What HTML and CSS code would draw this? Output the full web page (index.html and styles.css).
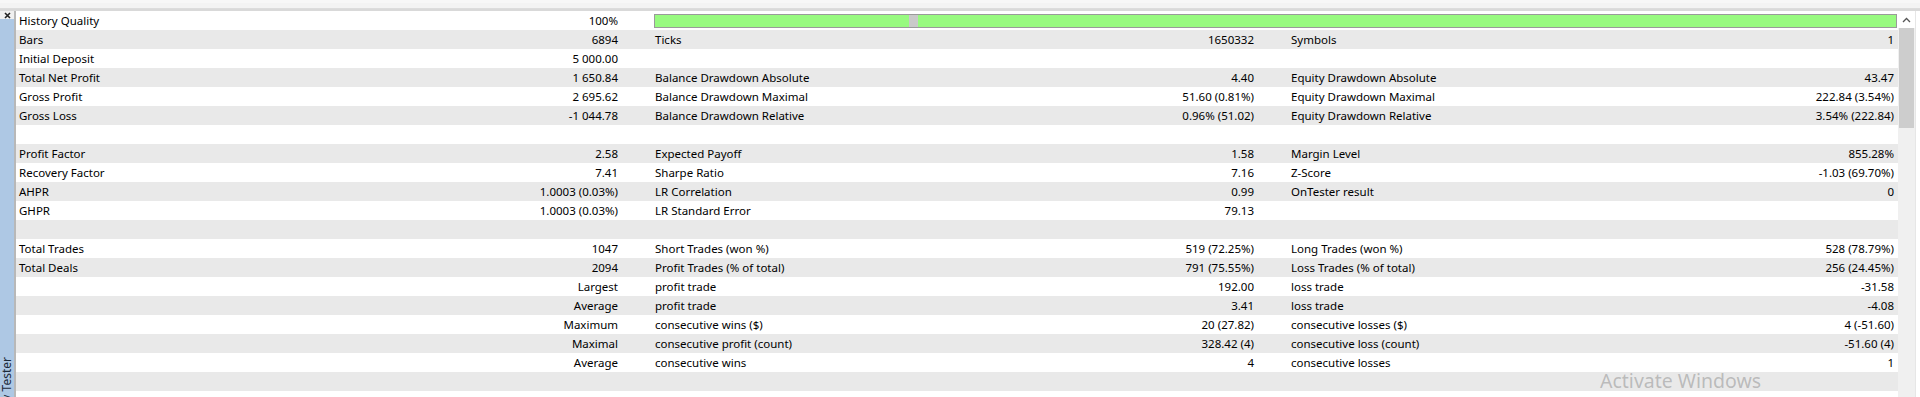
FILE: index.html
```html
<!DOCTYPE html>
<html>
<head>
<meta charset="utf-8">
<link rel="stylesheet" href="styles.css">
</head>
<body>
<div class="window">
  <div class="topstrip"></div>
  <div class="main">
    <div class="sidebar">
      <div class="close"><svg width="7" height="7" viewBox="0 0 7 7"><path d="M1 1L6 6M6 1L1 6" stroke="#222" stroke-width="1.6"/></svg></div>
      <div class="tab"><span class="tab-label">Strategy Tester</span></div>
    </div>
    <div class="table">
      <div class="row">
        <div class="pair"><span>History Quality</span><span>100%</span></div>
        <div class="quality"><div class="bar"><div class="mark"></div></div></div>
      </div>
      <div class="row">
        <div class="pair"><span>Bars</span><span>6894</span></div>
        <div class="pair"><span>Ticks</span><span>1650332</span></div>
        <div class="pair"><span>Symbols</span><span>1</span></div>
      </div>
      <div class="row">
        <div class="pair"><span>Initial Deposit</span><span>5 000.00</span></div>
      </div>
      <div class="row">
        <div class="pair"><span>Total Net Profit</span><span>1 650.84</span></div>
        <div class="pair"><span>Balance Drawdown Absolute</span><span>4.40</span></div>
        <div class="pair"><span>Equity Drawdown Absolute</span><span>43.47</span></div>
      </div>
      <div class="row">
        <div class="pair"><span>Gross Profit</span><span>2 695.62</span></div>
        <div class="pair"><span>Balance Drawdown Maximal</span><span>51.60 (0.81%)</span></div>
        <div class="pair"><span>Equity Drawdown Maximal</span><span>222.84 (3.54%)</span></div>
      </div>
      <div class="row">
        <div class="pair"><span>Gross Loss</span><span>-1 044.78</span></div>
        <div class="pair"><span>Balance Drawdown Relative</span><span>0.96% (51.02)</span></div>
        <div class="pair"><span>Equity Drawdown Relative</span><span>3.54% (222.84)</span></div>
      </div>
      <div class="row"></div>
      <div class="row">
        <div class="pair"><span>Profit Factor</span><span>2.58</span></div>
        <div class="pair"><span>Expected Payoff</span><span>1.58</span></div>
        <div class="pair"><span>Margin Level</span><span>855.28%</span></div>
      </div>
      <div class="row">
        <div class="pair"><span>Recovery Factor</span><span>7.41</span></div>
        <div class="pair"><span>Sharpe Ratio</span><span>7.16</span></div>
        <div class="pair"><span>Z-Score</span><span>-1.03 (69.70%)</span></div>
      </div>
      <div class="row">
        <div class="pair"><span>AHPR</span><span>1.0003 (0.03%)</span></div>
        <div class="pair"><span>LR Correlation</span><span>0.99</span></div>
        <div class="pair"><span>OnTester result</span><span>0</span></div>
      </div>
      <div class="row">
        <div class="pair"><span>GHPR</span><span>1.0003 (0.03%)</span></div>
        <div class="pair"><span>LR Standard Error</span><span>79.13</span></div>
      </div>
      <div class="row"></div>
      <div class="row">
        <div class="pair"><span>Total Trades</span><span>1047</span></div>
        <div class="pair"><span>Short Trades (won %)</span><span>519 (72.25%)</span></div>
        <div class="pair"><span>Long Trades (won %)</span><span>528 (78.79%)</span></div>
      </div>
      <div class="row">
        <div class="pair"><span>Total Deals</span><span>2094</span></div>
        <div class="pair"><span>Profit Trades (% of total)</span><span>791 (75.55%)</span></div>
        <div class="pair"><span>Loss Trades (% of total)</span><span>256 (24.45%)</span></div>
      </div>
      <div class="row">
        <div class="pair"><span></span><span>Largest</span></div>
        <div class="pair"><span>profit trade</span><span>192.00</span></div>
        <div class="pair"><span>loss trade</span><span>-31.58</span></div>
      </div>
      <div class="row">
        <div class="pair"><span></span><span>Average</span></div>
        <div class="pair"><span>profit trade</span><span>3.41</span></div>
        <div class="pair"><span>loss trade</span><span>-4.08</span></div>
      </div>
      <div class="row">
        <div class="pair"><span></span><span>Maximum</span></div>
        <div class="pair"><span>consecutive wins ($)</span><span>20 (27.82)</span></div>
        <div class="pair"><span>consecutive losses ($)</span><span>4 (-51.60)</span></div>
      </div>
      <div class="row">
        <div class="pair"><span></span><span>Maximal</span></div>
        <div class="pair"><span>consecutive profit (count)</span><span>328.42 (4)</span></div>
        <div class="pair"><span>consecutive loss (count)</span><span>-51.60 (4)</span></div>
      </div>
      <div class="row">
        <div class="pair"><span></span><span>Average</span></div>
        <div class="pair"><span>consecutive wins</span><span>4</span></div>
        <div class="pair"><span>consecutive losses</span><span>1</span></div>
      </div>
      <div class="row"></div>
      <div class="row"></div>
    </div>
    <div class="scrollbar">
      <div class="arrow"><svg width="9" height="6" viewBox="0 0 9 6"><path d="M1 5L4.5 1.5L8 5" fill="none" stroke="#555" stroke-width="1.3"/></svg></div>
      <div class="thumb"></div>
    </div>
    <div class="rightedge"></div>
  </div>
  <div class="watermark">Activate Windows</div>
</div>
</body>
</html>
```

FILE: styles.css
```css
html, body {
  margin: 0;
  padding: 0;
  background: #ffffff;
}

.window {
  position: relative;
  width: 1920px;
  height: 397px;
  overflow: hidden;
  font-family: "Noto Sans", "Open Sans", sans-serif;
  font-size: 11.5px;
  color: #000000;
}

.topstrip {
  height: 9px;
  background: #f3f3f3;
  border-top: 3px solid #f7f7f7;
  box-sizing: border-box;
  border-bottom: 1px solid #dcdcdc;
}

.main {
  display: flex;
  height: 388px;
  border-top: 2px solid #d9d9d9;
  box-sizing: border-box;
}

.sidebar {
  width: 14px;
  flex: none;
  display: flex;
  flex-direction: column;
  border-right: 2px solid #b8b8b8;
  background: #f0f0f0;
}

.close {
  height: 8px;
  display: flex;
  justify-content: center;
  align-items: center;
}

.tab {
  flex: 1;
  background: #aec8e4;
  display: flex;
  flex-direction: column;
  justify-content: flex-end;
  overflow: hidden;
}

.tab-label {
  display: block;
  writing-mode: vertical-rl;
  transform: rotate(180deg);
  font-size: 12px;
  color: #1d2a3a;
  white-space: nowrap;
  margin-bottom: -44px;
  line-height: 14px;
}

.table {
  flex: 1;
  overflow: hidden;
}

.row {
  height: 19px;
  box-sizing: border-box;
  display: grid;
  grid-template-columns: 599px 599px 1fr;
  column-gap: 37px;
  padding: 1px 4px 0 3px;
  align-items: center;
  line-height: 18px;
}

.row:nth-child(even) {
  background: #e9e9e9;
}

.pair {
  display: flex;
  justify-content: space-between;
  white-space: nowrap;
}

.quality {
  grid-column: 2 / 4;
  margin-left: -1px;
  margin-right: -3px;
  margin-top: -1px;
  display: flex;
  align-items: center;
}

.bar {
  flex: 1;
  height: 14px;
  box-sizing: border-box;
  border: 1px solid #9a9a9a;
  background: #98fa80;
  display: flex;
  padding-left: 254px;
}

.mark {
  width: 9px;
  background: #c9c9c9;
}

.scrollbar {
  width: 17px;
  flex: none;
  background: #f0f0f0;
  display: flex;
  flex-direction: column;
  align-items: center;
}

.arrow {
  height: 17px;
  width: 17px;
  background: #ffffff;
  display: flex;
  justify-content: center;
  align-items: center;
}

.thumb {
  width: 15px;
  height: 100px;
  background: #cdcdcd;
}

.rightedge {
  width: 5px;
  flex: none;
  background: #ffffff;
  border-left: 1px solid #e6e6e6;
  box-sizing: border-box;
}

.watermark {
  position: absolute;
  left: 1600px;
  top: 367px;
  font-family: "Noto Sans", "Open Sans", sans-serif;
  font-size: 19.5px;
  color: rgba(120, 120, 120, 0.42);
  white-space: nowrap;
}
```
